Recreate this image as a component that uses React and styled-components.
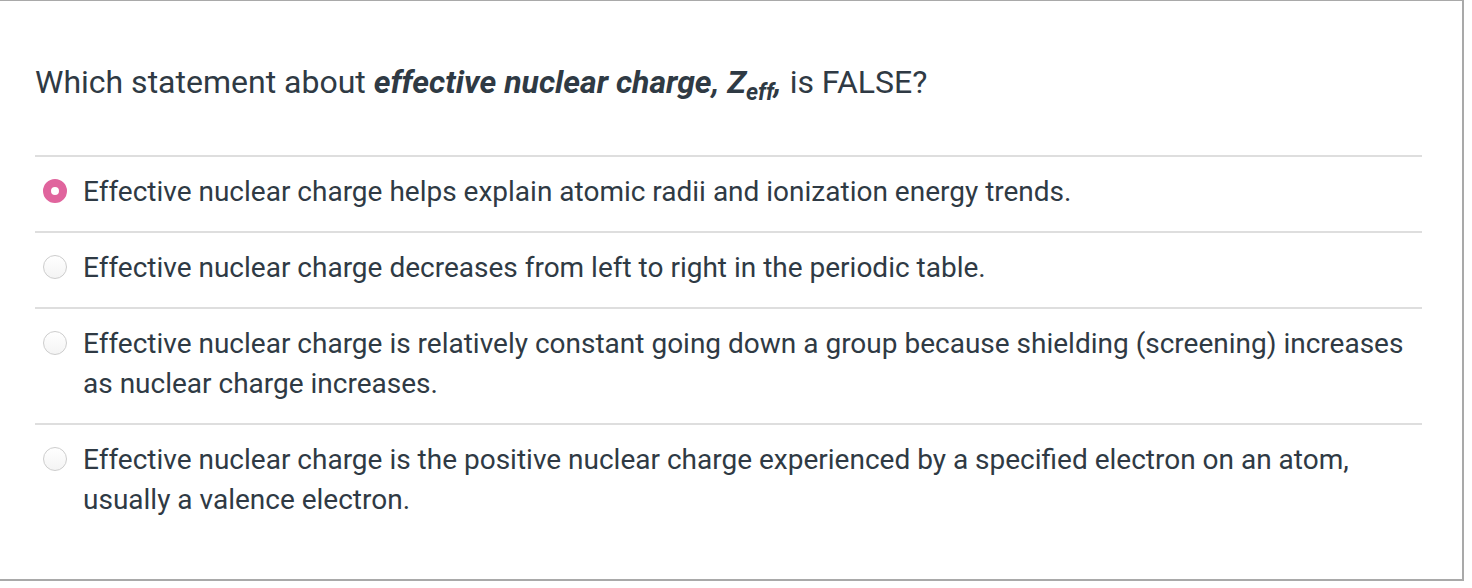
import styled, { createGlobalStyle } from "styled-components"

const Global = createGlobalStyle`
body{
margin:0;
background:#fff;
font-family:Roboto, "Liberation Sans", sans-serif;
color:#2f3a44;
}
`
const Frame = styled.div`
margin:-1px 0 0 -2px;
width:1466px;
height:582px;
box-sizing:border-box;
border:2px solid #a9a9a9;
padding:0 40px 0 35px;
background:#fff;
`
const Question = styled.div`
font-size:32px;
line-height:40px;
padding:61px 0 53px;
`
const Em = styled.strong`
font-weight:700;
font-style:italic;
`
const Sub = styled.sub`
font-size:0.72em;
vertical-align:-0.32em;
line-height:0;
`
const Option = styled.label`
display:flex;
align-items:flex-start;
border-top:2px solid #dedede;
padding:15px 0 19px;
font-size:28px;
line-height:40px;
cursor:pointer;
`
const Radio = styled.span`
flex:none;
width:24px;
height:24px;
box-sizing:border-box;
border-radius:50%;
margin:7px 16px 0 8px;
border:${p => (p.checked ? "8px solid #e0649d" : "1px solid #cdcdcd")};
background:${p => (p.checked ? "#fff" : "linear-gradient(#fff, #f4f4f4)")};
`
const OptionText = styled.span``

const options = [
  "Effective nuclear charge helps explain atomic radii and ionization energy trends.",
  "Effective nuclear charge decreases from left to right in the periodic table.",
  "Effective nuclear charge is relatively constant going down a group because shielding (screening) increases as nuclear charge increases.",
  "Effective nuclear charge is the positive nuclear charge experienced by a specified electron on an atom, usually a valence electron.",
]

const App = () => {
  return (
    <>
      <Global />
      <Frame>
        <Question>
          Which statement about{" "}
          <Em>
            effective nuclear charge, Z<Sub>eff</Sub>,
          </Em>{" "}
          is FALSE?
        </Question>
        {options.map((o, i) => (
          <Option key={i}>
            <Radio checked={i === 0} />
            <OptionText>{o}</OptionText>
          </Option>
        ))}
      </Frame>
    </>
  )
}
export default App
